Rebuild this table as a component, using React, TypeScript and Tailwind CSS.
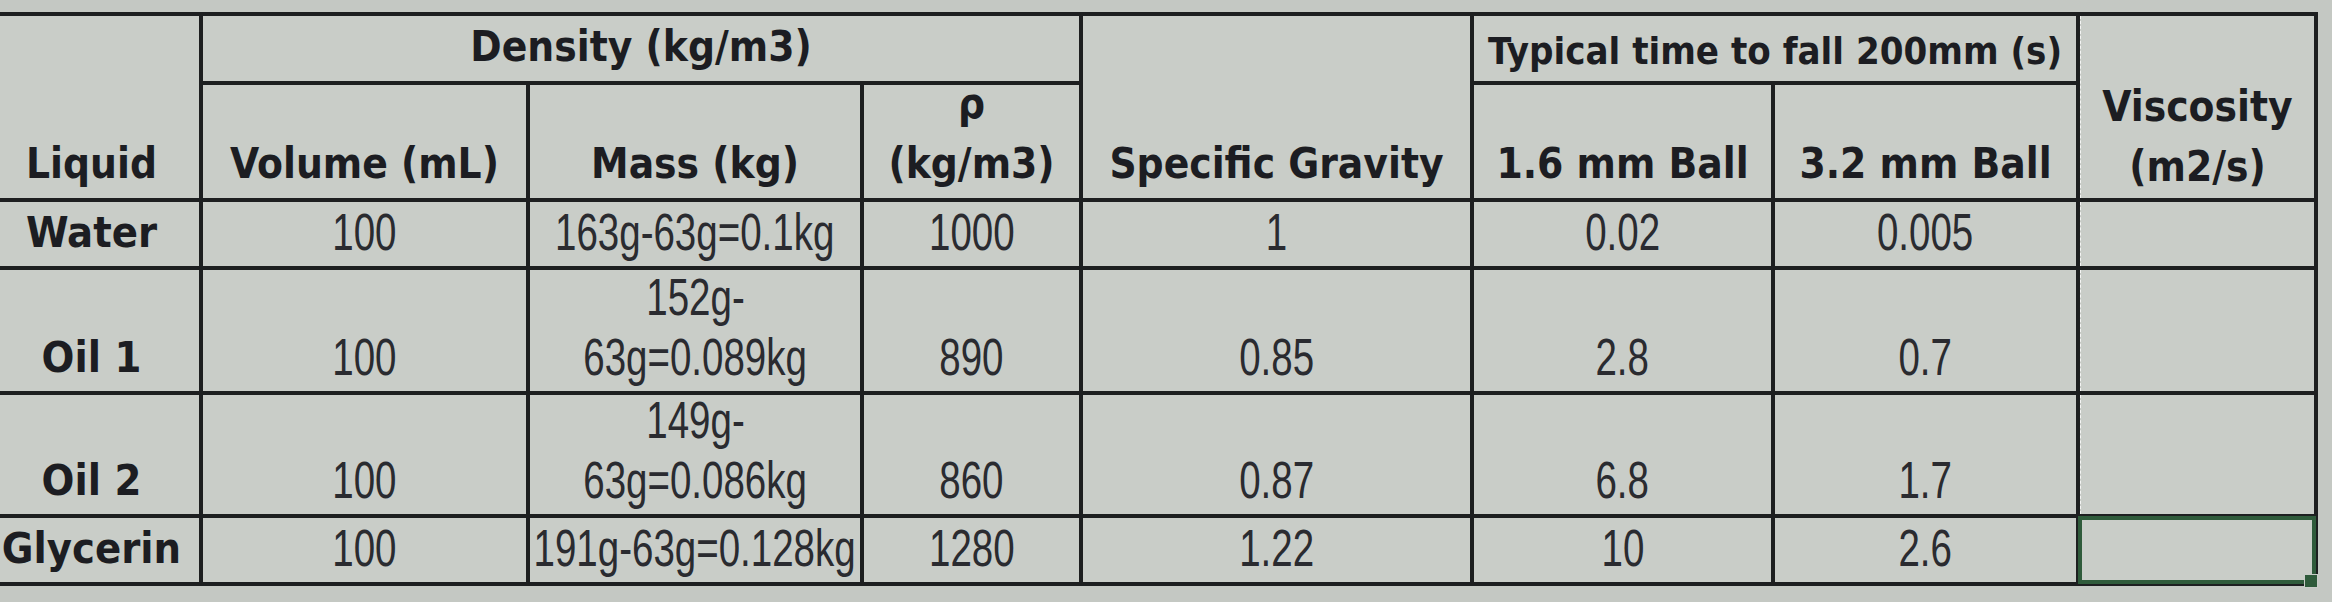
import React from 'react';

type Row = {
  name: string;
  volume: string;
  mass: string[];
  rho: string;
  sg: string;
  small: string;
  big: string;
};

const rows: Row[] = [
  { name: 'Water', volume: '100', mass: ['163g-63g=0.1kg'], rho: '1000', sg: '1', small: '0.02', big: '0.005' },
  { name: 'Oil 1', volume: '100', mass: ['152g-', '63g=0.089kg'], rho: '890', sg: '0.85', small: '2.8', big: '0.7' },
  { name: 'Oil 2', volume: '100', mass: ['149g-', '63g=0.086kg'], rho: '860', sg: '0.87', small: '6.8', big: '1.7' },
  { name: 'Glycerin', volume: '100', mass: ['191g-63g=0.128kg'], rho: '1280', sg: '1.22', small: '10', big: '2.6' },
];

const head = "font-['DejaVu_Sans_Condensed','DejaVu_Sans',sans-serif] font-bold text-[42px] leading-[60px] text-[#1c1d22] [font-stretch:condensed]";
const data = "font-['Liberation_Sans','Arial',sans-serif] text-[52px] leading-[60px] text-[#2a2b30]";
const cell = 'bg-[#c9cdc8] flex flex-col items-center justify-end text-center whitespace-nowrap pb-[4px]';

// narrow light digits like the sheet's condensed font
function Num({ children }: { children: React.ReactNode }) {
  return <span className="inline-block scale-x-[0.74]">{children}</span>;
}

export default function App() {
  return (
    <main className="w-[2332px] h-[602px] bg-[#c4c8c3] overflow-hidden pt-[12px]">
      <div className="-ml-[20px] w-max grid grid-cols-[215px_323px_330px_215px_387px_297px_301px_234px] grid-rows-[65px_113px_64px_121px_119px_64px] gap-[4px] p-[4px] bg-[#1d1f20]">
        {/* header row 1 */}
        <div className={`${cell} ${head} row-span-2`}>Liquid</div>
        <div className={`${cell} ${head} col-span-3`}>Density (kg/m3)</div>
        <div className={`${cell} ${head} row-span-2`}>Specific Gravity</div>
        <div className={`${cell} ${head} col-span-2 !text-[38px] !pb-0`}>Typical time to fall 200mm (s)</div>
        <div className={`${cell} ${head} row-span-2 border-l border-dashed border-white/80 !pb-[1px]`}>
          <span>Viscosity</span>
          <span>(m2/s)</span>
        </div>

        {/* header row 2 */}
        <div className={`${cell} ${head}`}>Volume (mL)</div>
        <div className={`${cell} ${head}`}>Mass (kg)</div>
        <div className={`${cell} ${head}`}>
          <span>ρ</span>
          <span>(kg/m3)</span>
        </div>
        <div className={`${cell} ${head}`}>1.6 mm Ball</div>
        <div className={`${cell} ${head}`}>3.2 mm Ball</div>

        {rows.map((r, i) => {
          const last = i === rows.length - 1;
          return (
            <React.Fragment key={r.name}>
              <div className={`${cell} ${head} !text-[43px]`}>{r.name}</div>
              <div className={`${cell} ${data}`}><Num>{r.volume}</Num></div>
              <div className={`${cell} ${data}`}>
                {r.mass.map(m => (
                  <Num key={m}>{m}</Num>
                ))}
              </div>
              <div className={`${cell} ${data}`}><Num>{r.rho}</Num></div>
              <div className={`${cell} ${data}`}><Num>{r.sg}</Num></div>
              <div className={`${cell} ${data}`}><Num>{r.small}</Num></div>
              <div className={`${cell} ${data}`}><Num>{r.big}</Num></div>
              {last ? (
                <div className="relative bg-[#c9cdc8] -m-[2px] border-[4px] border-[#2f5b3b]">
                  <span className="absolute -right-[6px] -bottom-[8px] w-[14px] h-[14px] bg-[#2f5b3b] border border-[#c9cdc8]" />
                </div>
              ) : (
                <div className="bg-[#c9cdc8] border-l border-dashed border-white/80" />
              )}
            </React.Fragment>
          );
        })}
      </div>
    </main>
  );
}
